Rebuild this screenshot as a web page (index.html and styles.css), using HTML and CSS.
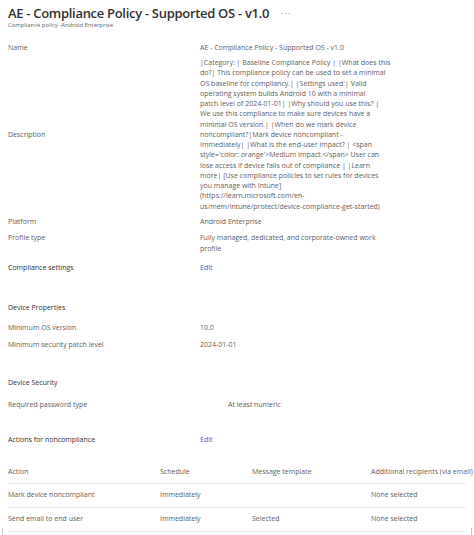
FILE: index.html
```html
<!DOCTYPE html>
<html>
<head>
<meta charset="utf-8">
<link rel="stylesheet" href="styles.css">
</head>
<body>
<div class="page">
  <header class="head">
    <div class="title-line">
      <h1 class="title">AE - Compliance Policy - Supported OS - v1.0</h1>
      <svg class="more" width="9" height="3" viewBox="0 0 9 3" aria-hidden="true">
        <circle cx="1" cy="1.5" r="0.6" fill="#a19f9d"/>
        <circle cx="4.5" cy="1.5" r="0.6" fill="#a19f9d"/>
        <circle cx="8" cy="1.5" r="0.6" fill="#a19f9d"/>
      </svg>
    </div>
    <div class="subtitle">Compliance policy -Android Enterprise</div>
  </header>

  <div class="row r-name">
    <div class="label">Name</div>
    <div class="value">AE - Compliance Policy - Supported OS - v1.0</div>
  </div>
  <div class="row r-desc center">
    <div class="label">Description</div>
    <div class="value">|Category: | Baseline Compliance Policy | |What does this<br>do?| This compliance policy can be used to set a minimal<br>OS baseline for compliancy.| |Settings used:| Valid<br>operating system builds Android 10 with a minimal<br>patch level of 2024-01-01| |Why should you use this? |<br>We use this compliance to make sure devices have a<br>minimal OS version.| |When do we mark device<br>noncompliant?|Mark device noncompliant -<br>Immediately| |What is the end-user impact? | &lt;span<br>style='color: orange'&gt;Medium Impact.&lt;/span&gt; User can<br>lose access if device fails out of compliance | |Learn<br>more| [Use compliance policies to set rules for devices<br>you manage with Intune]<br>(https://learn.microsoft.com/en-<br>us/mem/intune/protect/device-compliance-get-started)</div>
  </div>
  <div class="row r-platform">
    <div class="label">Platform</div>
    <div class="value">Android Enterprise</div>
  </div>
  <div class="row r-profile">
    <div class="label">Profile type</div>
    <div class="value">Fully managed, dedicated, and corporate-owned work<br>profile</div>
  </div>
  <div class="row r-comp">
    <div class="label strong">Compliance settings</div>
    <div class="value"><a class="link">Edit</a></div>
  </div>
  <div class="row r-devprop">
    <div class="label strong">Device Properties</div>
  </div>
  <div class="row r-minos">
    <div class="label">Minimum OS version</div>
    <div class="value">10.0</div>
  </div>
  <div class="row r-patch">
    <div class="label">Minimum security patch level</div>
    <div class="value">2024-01-01</div>
  </div>
  <div class="row r-devsec">
    <div class="label strong">Device Security</div>
  </div>
  <div class="row r-pass pass">
    <div class="label">Required password type</div>
    <div class="value">At least numeric</div>
  </div>
  <div class="row r-actions">
    <div class="label strong">Actions for noncompliance</div>
    <div class="value"><a class="link">Edit</a></div>
  </div>

  <div class="table">
    <div class="tr th">
      <div>Action</div><div>Schedule</div><div>Message template</div><div>Additional recipients (via email)</div>
    </div>
    <div class="tr">
      <div>Mark device noncompliant</div><div>Immediately</div><div></div><div>None selected</div>
    </div>
    <div class="tr">
      <div>Send email to end user</div><div>Immediately</div><div>Selected</div><div>None selected</div>
    </div>
  </div>
  <div class="frame"></div>
</div>
</body>
</html>
```

FILE: styles.css
```css
html, body {
  margin: 0;
  padding: 0;
  background: #ffffff;
}
body {
  font-family: "Open Sans", "Noto Sans", sans-serif;
  font-size: 7px;
  color: #605e5c;
  width: 474px;
  height: 535px;
  overflow: hidden;
}
.page {
  padding: 0 8px 0 8px;
  position: relative;
  height: 535px;
  box-sizing: border-box;
}
.head {
  padding-top: 5px;
}
.title-line {
  display: flex;
  align-items: center;
  gap: 12px;
}
.title {
  margin: 0;
  font-size: 13px;
  font-weight: 600;
  letter-spacing: -0.3px;
  color: #323130;
  line-height: 16px;
}
.more {
  display: block;
  margin-top: 1px;
}
.subtitle {
  font-size: 5.9px;
  color: #605e5c;
  line-height: 7px;
  margin-top: 1px;
}
.row {
  display: grid;
  grid-template-columns: 192px 1fr;
  line-height: 11px;
  align-items: start;
}
.row.center {
  align-items: center;
}
.r-desc .value {
  line-height: 10.25px;
}
.label {
  color: #605e5c;
}
.label.strong {
  color: #323130;
}
.value {
  color: #605e5c;
}
.row.pass {
  grid-template-columns: 220px 1fr;
}
.link {
  color: #0078d4;
  text-decoration: none;
}
.r-name { margin-top: 13px; }
.r-desc { margin-top: 5px; }
.r-platform { margin-top: 4px; }
.r-profile { margin-top: 5px; }
.r-comp { margin-top: 8px; }
.r-devprop { margin-top: 29px; }
.r-minos { margin-top: 9px; }
.r-patch { margin-top: 6px; }
.r-devsec { margin-top: 27px; }
.r-pass { margin-top: 11px; }
.r-actions { margin-top: 24px; }
.table {
  margin-top: 21px;
}
.tr {
  display: grid;
  grid-template-columns: 152px 92px 119px 1fr;
  line-height: 11px;
  padding: 5px 0 7px 0;
  border-bottom: 1px solid #edebe9;
  color: #605e5c;
  white-space: nowrap;
}
.tr.th {
  padding-top: 0;
  padding-bottom: 6px;
}
.frame {
  position: absolute;
  left: 2px;
  right: 2px;
  top: 528px;
  height: 20px;
  border-left: 1px solid #c8c6c4;
  border-right: 1px solid #c8c6c4;
}
```
